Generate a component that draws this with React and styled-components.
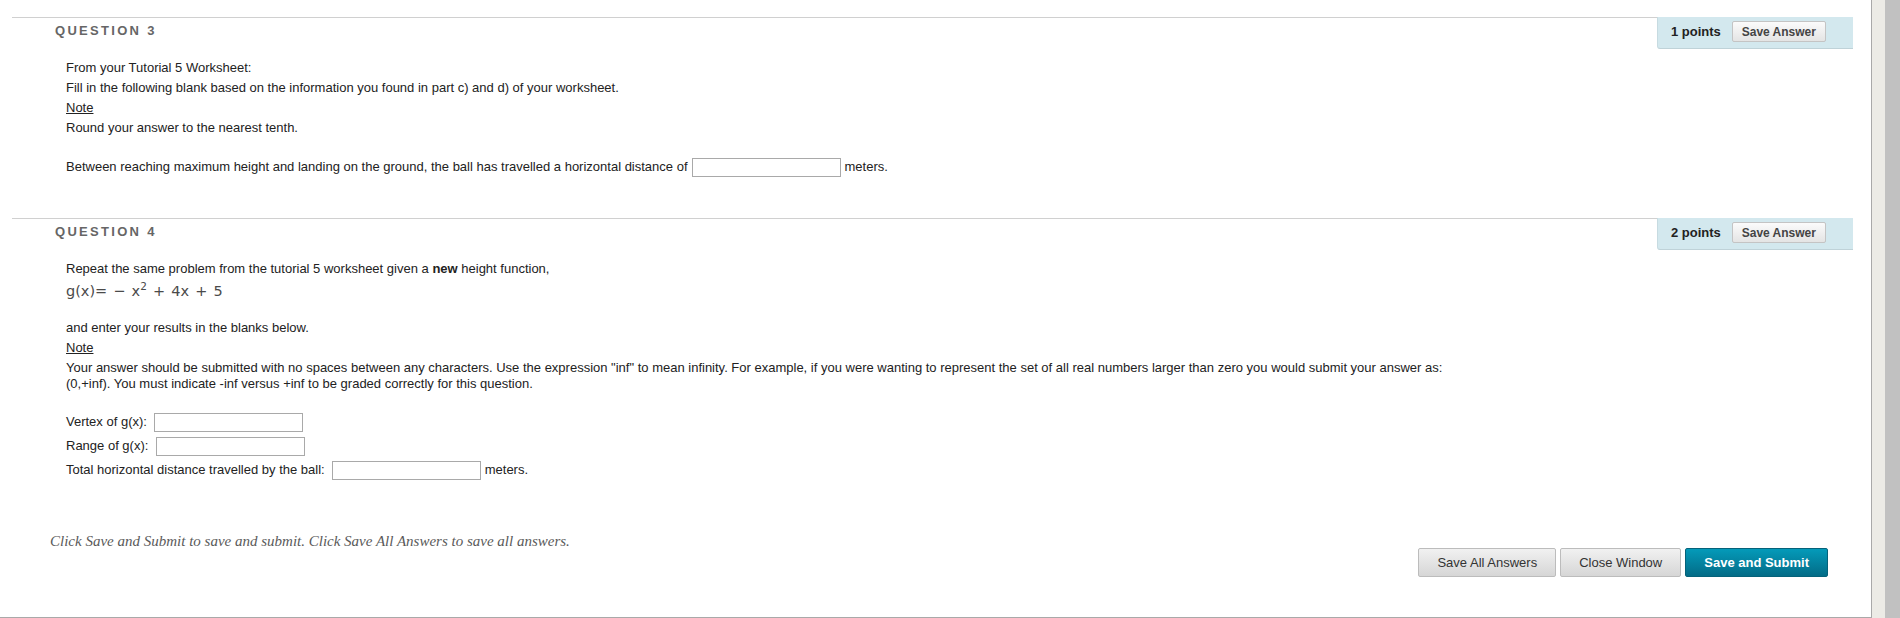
import React from "react";
import styled, { createGlobalStyle } from "styled-components";

const GlobalStyle = createGlobalStyle`
  html, body {
    margin: 0;
    padding: 0;
    background: #fff;
  }
  body {
    font-family: "Liberation Sans", Arial, sans-serif;
    font-size: 13px;
    color: #222;
  }
`;

const Page = styled.div`
  display: flex;
  height: 618px;
  overflow: hidden;
`;

const Main = styled.main`
  flex: none;
  width: 1872px;
  height: 618px;
  box-sizing: border-box;
  padding-top: 17px;
  border-right: 1px solid #a9a9a9;
  border-bottom: 1px solid #a9a9a9;
  display: flex;
  flex-direction: column;
`;

const Gutter = styled.div`
  flex: none;
  width: 13px;
  background: #ecebe6;
`;

const Scrollbar = styled.div`
  flex: 1;
  background: #c1c1c1;
`;

const Question = styled.section`
  margin: 0 18px 0 12px;
  & + & {
    margin-top: 37px;
  }
`;

const Header = styled.div`
  display: flex;
  justify-content: space-between;
  align-items: flex-start;
  border-top: 1px solid #d0d0d0;
`;

const Title = styled.h2`
  margin: 0;
  padding: 5px 0 0 43px;
  font-size: 13px;
  line-height: 15px;
  font-weight: bold;
  letter-spacing: 2.3px;
  text-transform: uppercase;
  color: #666;
`;

const PointsPanel = styled.div`
  width: 196px;
  height: 32px;
  box-sizing: border-box;
  margin-top: -1px;
  display: flex;
  align-items: center;
  gap: 11px;
  padding: 0 0 2px 13px;
  background: #d3e8ee;
  border-left: 1px solid #c7dbe1;
  border-bottom: 1px solid #bfd2d8;
  border-bottom-left-radius: 3px;
`;

const Points = styled.span`
  font-size: 13px;
  font-weight: bold;
  color: #222;
`;

const SmallButton = styled.button`
  width: 94px;
  height: 21px;
  padding: 0;
  font-family: inherit;
  font-size: 12px;
  font-weight: bold;
  color: #444;
  background: linear-gradient(#fbfbfb, #e4e4e4);
  border: 1px solid #c4c4c4;
  border-radius: 2px;
`;

const Body = styled.div`
  padding: 11px 0 0 54px;
  color: #222;
`;

const Line = styled.p`
  margin: 0 0 4px;
  line-height: 16px;
`;

const Note = styled.span`
  text-decoration: underline;
`;

const Formula = styled.div`
  margin: 0 0 19px;
  font-family: "DejaVu Sans", "Open Sans", sans-serif;
  font-size: 14.5px;
  line-height: 20px;
  color: #4a4a4a;
  word-spacing: 1.5px;
  sup {
    font-size: 10.5px;
    line-height: 0;
    vertical-align: 6px;
  }
`;

const FieldRow = styled.div`
  display: flex;
  align-items: center;
  gap: 4px;
  height: 20px;
  line-height: 16px;
  margin-top: ${(p) => p.$top || 0}px;
  margin-bottom: 4px;
`;

const Blank = styled.input`
  width: 149px;
  height: 19px;
  box-sizing: border-box;
  margin: 0 0 0 ${(p) => p.$offset || 0}px;
  padding: 0 3px;
  border: 1px solid #a9a9a9;
  background: #fff;
  font-family: inherit;
  font-size: 12px;
`;

const Footer = styled.div`
  margin-top: auto;
  margin-bottom: 40px;
  padding: 0 43px 0 50px;
  display: flex;
  justify-content: space-between;
  align-items: flex-start;
`;

const Instructions = styled.p`
  margin: 0;
  font-family: "Liberation Serif", Georgia, serif;
  font-style: italic;
  font-size: 15px;
  line-height: 18px;
  color: #5a5a5a;
`;

const ButtonBar = styled.div`
  display: flex;
  gap: 4px;
  margin-top: 16px;
`;

const ActionButton = styled.button`
  height: 29px;
  padding: 0 18px;
  font-family: inherit;
  font-size: 13px;
  font-weight: ${(p) => (p.$primary ? "bold" : "normal")};
  color: ${(p) => (p.$primary ? "#fff" : "#333")};
  background: ${(p) =>
    p.$primary
      ? "linear-gradient(#049ab9, #036c87)"
      : "linear-gradient(#f1f1f1, #d6d6d6)"};
  border: 1px solid ${(p) => (p.$primary ? "#05627a" : "#bcbcbc")};
  border-radius: 2px;
`;

function QuestionHeader({ number, points }) {
  return (
    <Header>
      <Title>Question {number}</Title>
      <PointsPanel>
        <Points>{points} points</Points>
        <SmallButton type="button">Save Answer</SmallButton>
      </PointsPanel>
    </Header>
  );
}

export default function App() {
  return (
    <Page>
      <GlobalStyle />
      <Main>
        <Question>
          <QuestionHeader number={3} points={1} />
          <Body>
            <Line>From your Tutorial 5 Worksheet:</Line>
            <Line>
              Fill in the following blank based on the information you found in
              part c) and d) of your worksheet.
            </Line>
            <Line>
              <Note>Note</Note>
            </Line>
            <Line>Round your answer to the nearest tenth.</Line>
            <FieldRow $top={21}>
              <span>
                Between reaching maximum height and landing on the ground, the
                ball has travelled a horizontal distance of
              </span>
              <Blank type="text" />
              <span>meters.</span>
            </FieldRow>
          </Body>
        </Question>

        <Question>
          <QuestionHeader number={4} points={2} />
          <Body>
            <Line>
              Repeat the same problem from the tutorial 5 worksheet given a{" "}
              <b>new</b> height function,
            </Line>
            <Formula>
              g(x)= − x<sup>2</sup> + 4x + 5
            </Formula>
            <Line>and enter your results in the blanks below.</Line>
            <Line>
              <Note>Note</Note>
            </Line>
            <Line>
              Your answer should be submitted with no spaces between any
              characters. Use the expression "inf" to mean infinity. For
              example, if you were wanting to represent the set of all real
              numbers larger than zero you would submit your answer as:
              <br />
              (0,+inf). You must indicate -inf versus +inf to be graded
              correctly for this question.
            </Line>
            <FieldRow $top={20}>
              <span>Vertex of g(x):</span>
              <Blank type="text" $offset={3} />
            </FieldRow>
            <FieldRow>
              <span>Range of g(x):</span>
              <Blank type="text" $offset={4} />
            </FieldRow>
            <FieldRow>
              <span>Total horizontal distance travelled by the ball:</span>
              <Blank type="text" $offset={3} />
              <span>meters.</span>
            </FieldRow>
          </Body>
        </Question>

        <Footer>
          <Instructions>
            Click Save and Submit to save and submit. Click Save All Answers to
            save all answers.
          </Instructions>
          <ButtonBar>
            <ActionButton type="button">Save All Answers</ActionButton>
            <ActionButton type="button">Close Window</ActionButton>
            <ActionButton type="button" $primary>
              Save and Submit
            </ActionButton>
          </ButtonBar>
        </Footer>
      </Main>
      <Gutter />
      <Scrollbar />
    </Page>
  );
}
